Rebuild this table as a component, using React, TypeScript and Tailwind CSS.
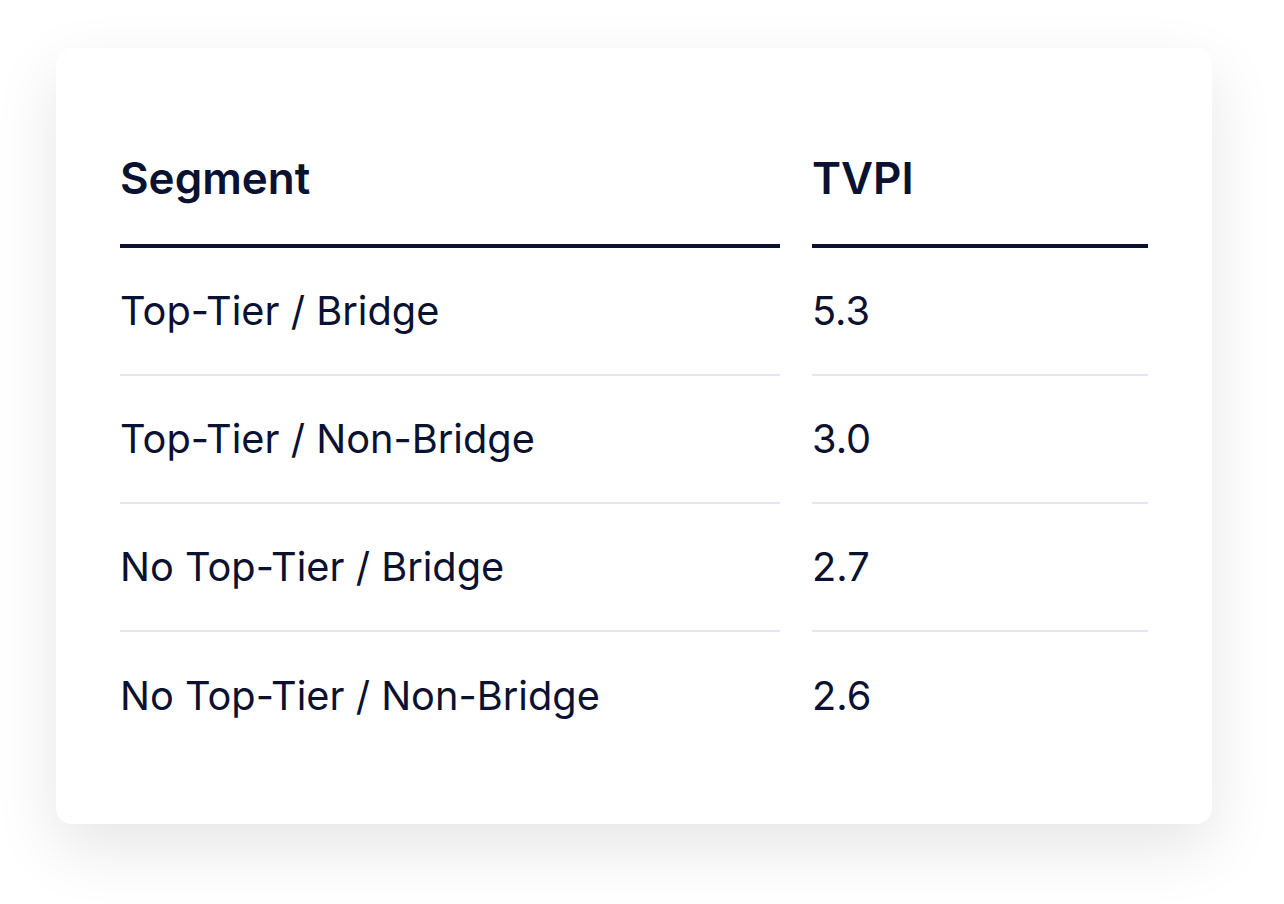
import { Fragment } from "react";

export default function App() {
  const rows = [
    ["Top-Tier / Bridge", "5.3"],
    ["Top-Tier / Non-Bridge", "3.0"],
    ["No Top-Tier / Bridge", "2.7"],
    ["No Top-Tier / Non-Bridge", "2.6"],
  ];
  return (
    <div className="min-h-[904px] w-[1284px] bg-white pt-[48px] pl-[56px]" style={{ fontFamily: "Inter, 'Noto Sans', sans-serif" }}>
      <div className="w-[1156px] h-[776px] rounded-2xl bg-white px-16 pt-16 shadow-[0_24px_64px_rgba(0,0,0,0.10)] text-[#0b1130]">
        <div className="grid grid-cols-[660px_336px] gap-x-8">
          <div className="h-[136px] flex items-center border-b-4 border-[#0b1130] text-[44px] font-semibold">Segment</div>
          <div className="h-[136px] flex items-center border-b-4 border-[#0b1130] text-[44px] font-semibold">TVPI</div>
          {rows.map(([s, v], i) => (
            <Fragment key={s}>
              <div className={`h-[128px] flex items-center text-[39.75px] ${i < rows.length - 1 ? "border-b-2 border-[#e3e6ee]" : ""}`}>{s}</div>
              <div className={`h-[128px] flex items-center text-[39.75px] ${i < rows.length - 1 ? "border-b-2 border-[#e3e6ee]" : ""}`}>{v}</div>
            </Fragment>
          ))}
        </div>
      </div>
    </div>
  );
}
